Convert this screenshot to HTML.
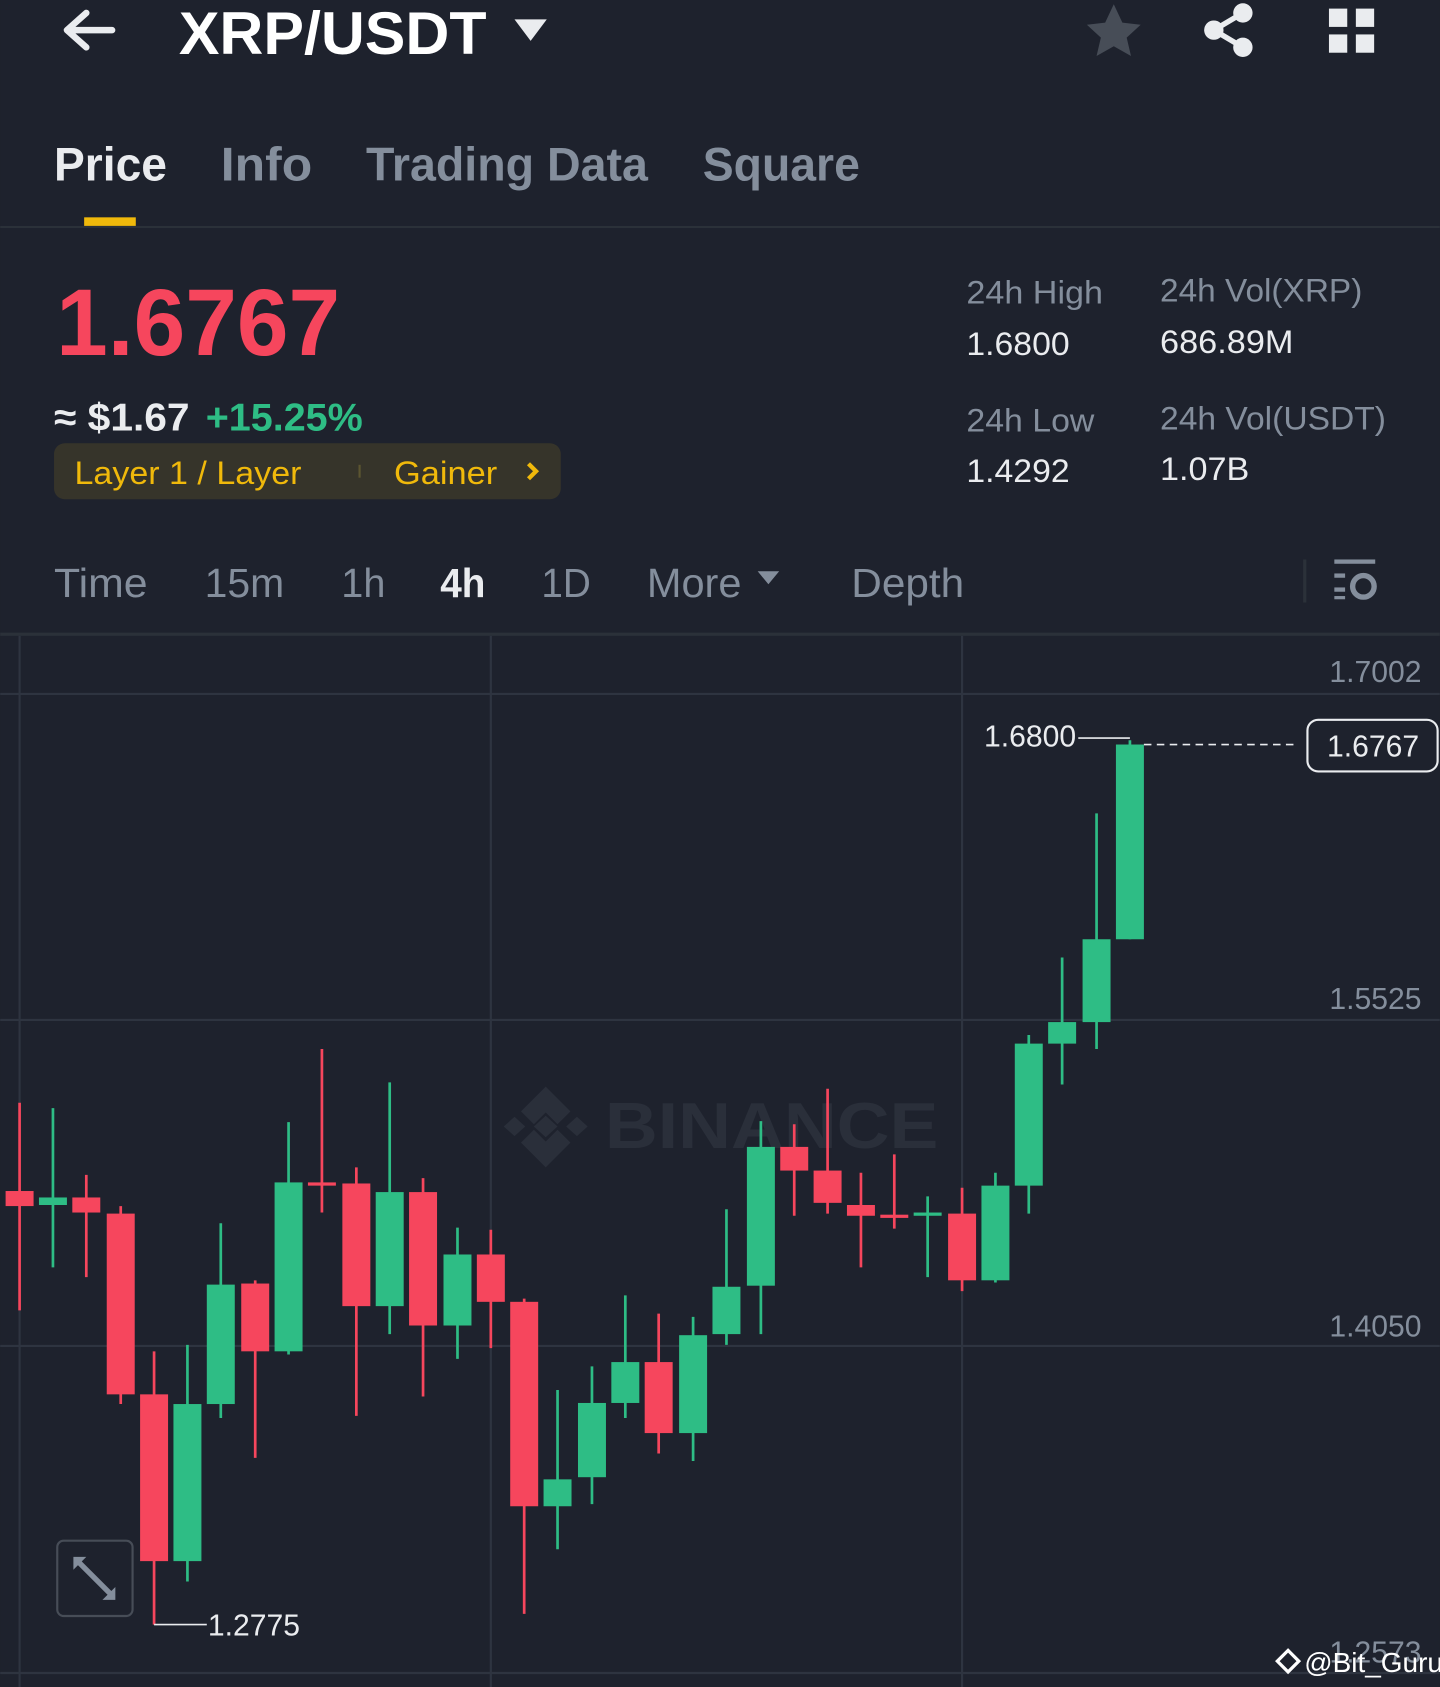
<!DOCTYPE html>
<html><head><meta charset="utf-8"><style>
html,body{margin:0;padding:0;background:#1e222d;}
svg{display:block}
text{font-family:"Liberation Sans","DejaVu Sans",sans-serif}
</style></head><body>
<svg width="1440" height="1687" viewBox="0 0 1338 1568" xmlns="http://www.w3.org/2000/svg">
<rect width="1338" height="1568" fill="#1e222d"/>
<!-- header -->
<path d="M104 28 H64 M80 12 L62 28 L80 44" stroke="#eaecef" stroke-width="6" fill="none" stroke-linecap="round" stroke-linejoin="round"/>
<text x="166" y="50" font-size="56" font-weight="bold" fill="#ffffff" textLength="286" lengthAdjust="spacingAndGlyphs">XRP/USDT</text>
<path d="M478 18 H508 L493 38 Z" fill="#eaecef"/>
<path d="M1035 4 L1043 21 L1060 23 L1047 35 L1051 52 L1035 43 L1019 52 L1023 35 L1010 23 L1027 21 Z" fill="#474d57"/>
<g fill="#eaecef"><circle cx="1155" cy="12" r="9"/><circle cx="1128" cy="28" r="9"/><circle cx="1155" cy="44" r="9"/></g>
<path d="M1155 12 L1128 28 L1155 44" stroke="#eaecef" stroke-width="5" fill="none"/>
<g fill="#eaecef"><rect x="1235" y="8" width="17" height="17"/><rect x="1260" y="8" width="17" height="17"/><rect x="1235" y="32" width="17" height="17"/><rect x="1260" y="32" width="17" height="17"/></g>
<!-- tabs -->
<text x="50" y="168" font-size="44" font-weight="bold" fill="#eaecef" textLength="105" lengthAdjust="spacingAndGlyphs">Price</text>
<text x="205" y="168" font-size="44" font-weight="bold" fill="#848e9c" textLength="85" lengthAdjust="spacingAndGlyphs">Info</text>
<text x="340" y="168" font-size="44" font-weight="bold" fill="#848e9c" textLength="262" lengthAdjust="spacingAndGlyphs">Trading Data</text>
<text x="653" y="168" font-size="44" font-weight="bold" fill="#848e9c" textLength="146" lengthAdjust="spacingAndGlyphs">Square</text>
<rect x="78" y="202" width="48" height="8" fill="#f0b90b"/>
<rect x="0" y="210" width="1338" height="2" fill="#2b3139"/>
<!-- price -->
<text x="52" y="330" font-size="88" font-weight="bold" fill="#f6465d" textLength="264" lengthAdjust="spacingAndGlyphs">1.6767</text>
<text x="50" y="400" font-size="36" font-weight="bold" fill="#eaecef" textLength="126" lengthAdjust="spacingAndGlyphs">≈ $1.67</text>
<text x="191" y="400" font-size="36" font-weight="bold" fill="#2ebd85" textLength="146" lengthAdjust="spacingAndGlyphs">+15.25%</text>
<rect x="50" y="412" width="471" height="52" rx="10" fill="#36342a"/>
<text x="69" y="450" font-size="30" fill="#f0b90b" textLength="211" lengthAdjust="spacingAndGlyphs">Layer 1 / Layer</text>
<rect x="333" y="432" width="2" height="12" fill="#5c5530"/>
<text x="366" y="450" font-size="30" fill="#f0b90b" textLength="96" lengthAdjust="spacingAndGlyphs">Gainer</text>
<path d="M491 431 L498 438 L491 445" stroke="#f0b90b" stroke-width="4" fill="none"/>
<!-- stats -->
<g font-size="30">
<text x="898" y="282" fill="#848e9c" textLength="127" lengthAdjust="spacingAndGlyphs">24h High</text>
<text x="1078" y="280" fill="#848e9c" textLength="188" lengthAdjust="spacingAndGlyphs">24h Vol(XRP)</text>
<text x="898" y="330" fill="#eaecef" textLength="96" lengthAdjust="spacingAndGlyphs">1.6800</text>
<text x="1078" y="328" fill="#eaecef" textLength="124" lengthAdjust="spacingAndGlyphs">686.89M</text>
<text x="898" y="401" fill="#848e9c" textLength="119" lengthAdjust="spacingAndGlyphs">24h Low</text>
<text x="1078" y="399" fill="#848e9c" textLength="210" lengthAdjust="spacingAndGlyphs">24h Vol(USDT)</text>
<text x="898" y="448" fill="#eaecef" textLength="96" lengthAdjust="spacingAndGlyphs">1.4292</text>
<text x="1078" y="446" fill="#eaecef" textLength="83" lengthAdjust="spacingAndGlyphs">1.07B</text>
</g>
<!-- intervals -->
<g font-size="38" fill="#848e9c">
<text x="50" y="555" textLength="87" lengthAdjust="spacingAndGlyphs">Time</text>
<text x="190" y="555" textLength="74" lengthAdjust="spacingAndGlyphs">15m</text>
<text x="317" y="555" textLength="41" lengthAdjust="spacingAndGlyphs">1h</text>
<text x="409" y="555" fill="#eaecef" font-weight="bold" textLength="42" lengthAdjust="spacingAndGlyphs">4h</text>
<text x="503" y="555" textLength="46" lengthAdjust="spacingAndGlyphs">1D</text>
<text x="601" y="555" textLength="88" lengthAdjust="spacingAndGlyphs">More</text>
<text x="791" y="555" textLength="105" lengthAdjust="spacingAndGlyphs">Depth</text>
</g>
<path d="M704 531 H724 L714 543 Z" fill="#848e9c"/>
<rect x="1211" y="520" width="3" height="40" fill="#2b3139"/>
<g fill="#848e9c"><rect x="1240" y="520" width="38" height="4"/><rect x="1240" y="533" width="10" height="4"/><rect x="1240" y="546" width="10" height="4"/><rect x="1240" y="554" width="10" height="3"/></g>
<circle cx="1267" cy="545" r="10" fill="none" stroke="#848e9c" stroke-width="5"/>
<!-- chart grid -->
<rect x="0" y="588" width="1338" height="3" fill="#2b3139"/>
<g stroke="#2e3440" stroke-width="2">
<line x1="0" y1="645" x2="1338" y2="645"/><line x1="0" y1="948" x2="1338" y2="948"/><line x1="0" y1="1251" x2="1338" y2="1251"/><line x1="0" y1="1555" x2="1338" y2="1555"/>
<line x1="18" y1="591" x2="18" y2="1568"/><line x1="456" y1="591" x2="456" y2="1568"/><line x1="894" y1="591" x2="894" y2="1568"/>
</g>
<!-- watermark -->
<g fill="#2a2f3a">
<path d="M507 1010 L530 1033 L518 1045 L507 1034 L496 1045 L484 1033 Z"/>
<path d="M507 1085 L530 1062 L518 1050 L507 1061 L496 1050 L484 1062 Z"/>
<path d="M507 1037 L518 1047 L507 1057 L496 1047 Z"/>
<path d="M478 1038 L488 1047 L478 1056 L468 1047 Z"/><path d="M536 1038 L546 1047 L536 1056 L526 1047 Z"/>
<text x="562" y="1067" font-size="60" font-weight="bold" textLength="310" lengthAdjust="spacingAndGlyphs">BINANCE</text>
</g>
<!-- axis labels -->
<g font-size="28" fill="#848e9c" text-anchor="end">
<text x="1321" y="634">1.7002</text>
<text x="1321" y="938">1.5525</text>
<text x="1321" y="1242">1.4050</text>
<text x="1321" y="1545">1.2573</text>
</g>
<!-- candles -->
<g id="c">
<g fill="#f6465d" stroke="#f6465d" stroke-width="2.5">
<line x1="18" y1="1025" x2="18" y2="1218"/><rect x="5" y="1107" width="26" height="14" stroke="none"/>
<line x1="80" y1="1092" x2="80" y2="1187"/><rect x="67" y="1113" width="26" height="14" stroke="none"/>
<line x1="112" y1="1121" x2="112" y2="1305"/><rect x="99" y="1128" width="26" height="168" stroke="none"/>
<line x1="143" y1="1256" x2="143" y2="1510"/><rect x="130" y="1296" width="26" height="155" stroke="none"/>
<line x1="237" y1="1190" x2="237" y2="1355"/><rect x="224" y="1193" width="26" height="63" stroke="none"/>
<line x1="299" y1="975" x2="299" y2="1127"/><rect x="286" y="1099" width="26" height="3" stroke="none"/>
<line x1="331" y1="1085" x2="331" y2="1316"/><rect x="318" y="1100" width="26" height="114" stroke="none"/>
<line x1="393" y1="1095" x2="393" y2="1298"/><rect x="380" y="1108" width="26" height="124" stroke="none"/>
<line x1="456" y1="1143" x2="456" y2="1253"/><rect x="443" y="1166" width="26" height="44" stroke="none"/>
<line x1="487" y1="1207" x2="487" y2="1500"/><rect x="474" y="1210" width="26" height="190" stroke="none"/>
<line x1="612" y1="1221" x2="612" y2="1351"/><rect x="599" y="1266" width="26" height="66" stroke="none"/>
<line x1="738" y1="1045" x2="738" y2="1130"/><rect x="725" y="1066" width="26" height="22" stroke="none"/>
<line x1="769" y1="1012" x2="769" y2="1128"/><rect x="756" y="1088" width="26" height="30" stroke="none"/>
<line x1="800" y1="1090" x2="800" y2="1178"/><rect x="787" y="1120" width="26" height="10" stroke="none"/>
<line x1="831" y1="1073" x2="831" y2="1142"/><rect x="818" y="1129" width="26" height="3" stroke="none"/>
<line x1="894" y1="1104" x2="894" y2="1200"/><rect x="881" y="1128" width="26" height="62" stroke="none"/>
</g>
<g fill="#2ebd85" stroke="#2ebd85" stroke-width="2.5">
<line x1="49" y1="1030" x2="49" y2="1178"/><rect x="36" y="1113" width="26" height="7" stroke="none"/>
<line x1="174" y1="1250" x2="174" y2="1470"/><rect x="161" y="1305" width="26" height="146" stroke="none"/>
<line x1="205" y1="1137" x2="205" y2="1318"/><rect x="192" y="1194" width="26" height="111" stroke="none"/>
<line x1="268" y1="1043" x2="268" y2="1259"/><rect x="255" y="1099" width="26" height="157" stroke="none"/>
<line x1="362" y1="1006" x2="362" y2="1240"/><rect x="349" y="1108" width="26" height="106" stroke="none"/>
<line x1="425" y1="1141" x2="425" y2="1263"/><rect x="412" y="1166" width="26" height="66" stroke="none"/>
<line x1="518" y1="1292" x2="518" y2="1440"/><rect x="505" y="1375" width="26" height="25" stroke="none"/>
<line x1="550" y1="1270" x2="550" y2="1398"/><rect x="537" y="1304" width="26" height="69" stroke="none"/>
<line x1="581" y1="1204" x2="581" y2="1318"/><rect x="568" y="1266" width="26" height="38" stroke="none"/>
<line x1="644" y1="1224" x2="644" y2="1358"/><rect x="631" y="1241" width="26" height="91" stroke="none"/>
<line x1="675" y1="1124" x2="675" y2="1250"/><rect x="662" y="1196" width="26" height="44" stroke="none"/>
<line x1="707" y1="1042" x2="707" y2="1240"/><rect x="694" y="1066" width="26" height="129" stroke="none"/>
<line x1="862" y1="1112" x2="862" y2="1187"/><rect x="849" y="1127" width="26" height="3" stroke="none"/>
<line x1="925" y1="1090" x2="925" y2="1192"/><rect x="912" y="1102" width="26" height="88" stroke="none"/>
<line x1="956" y1="962" x2="956" y2="1128"/><rect x="943" y="970" width="26" height="132" stroke="none"/>
<line x1="987" y1="890" x2="987" y2="1008"/><rect x="974" y="950" width="26" height="20" stroke="none"/>
<line x1="1019" y1="756" x2="1019" y2="975"/><rect x="1006" y="873" width="26" height="77" stroke="none"/>
<line x1="1050" y1="688" x2="1050" y2="873"/><rect x="1037" y="692" width="26" height="181" stroke="none"/>
</g>
</g>
<!-- high/low markers -->
<line x1="1002" y1="686" x2="1050" y2="686" stroke="#eaecef" stroke-width="1.5"/>
<text x="1000" y="694" font-size="28" fill="#eaecef" text-anchor="end">1.6800</text>
<line x1="143" y1="1510" x2="192" y2="1510" stroke="#eaecef" stroke-width="1.5"/>
<text x="193" y="1520" font-size="28" fill="#eaecef">1.2775</text>
<line x1="1063" y1="692" x2="1205" y2="692" stroke="#eaecef" stroke-width="1.5" stroke-dasharray="7 5"/>
<rect x="1215" y="669" width="121" height="48" rx="10" fill="#1e222d" stroke="#eaecef" stroke-width="2"/>
<text x="1276" y="703" font-size="28" fill="#eaecef" text-anchor="middle">1.6767</text>
<!-- expand button -->
<rect x="53" y="1432" width="70" height="70" rx="6" fill="#1e222d" stroke="#474d57" stroke-width="2"/>
<path d="M68 1447 L80 1447 L68 1459 Z M107 1487 L95 1487 L107 1475 Z" fill="#848e9c"/>
<path d="M70 1449 L105 1484" stroke="#848e9c" stroke-width="5"/>
<!-- credit -->
<text x="1212" y="1554" font-size="26" fill="#ffffff">@Bit_Guru</text>
<path d="M1197 1534 L1207 1544 L1197 1554 L1187 1544 Z" fill="none" stroke="#ffffff" stroke-width="3"/>
</svg>
</body></html>
